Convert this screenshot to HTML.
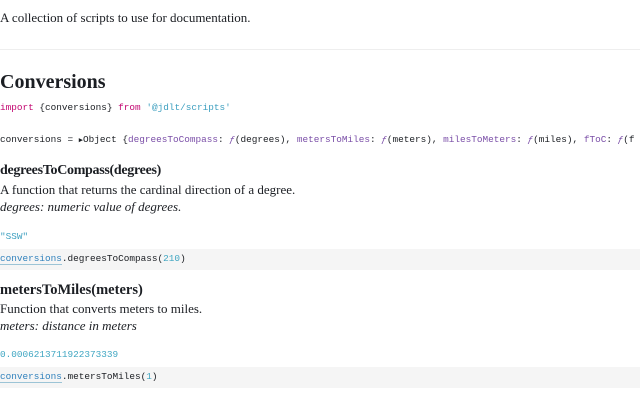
<!DOCTYPE html>
<html><head><style>
body{margin:0;width:640px;height:400px;overflow:hidden;background:#fff;color:#1b1e23;font-family:"Liberation Serif",serif;}
.a{position:absolute;left:0;white-space:nowrap;}
.m{font-family:"Liberation Mono",monospace;font-size:9.4px;color:#1b1e23;}
.s{font-size:13px;}
.k{color:#c30771}.str{color:#3fa0c0}.p{color:#7b4fa8}.n{color:#3fa6c2}
.u{border-bottom:1px solid #9cc4d6;color:#3182bd}
.bg{position:absolute;left:0;width:640px;height:21px;background:#f5f5f5;}
</style></head><body>
<div class="a s" style="top:10px">A collection of scripts to use for documentation.</div>
<div style="position:absolute;left:0;top:49px;width:640px;height:1px;background:#eee"></div>
<div class="a" style="top:71px;font-size:20px;font-weight:bold">Conversions</div>
<div class="a m" style="top:102px"><span class="k">import</span> {conversions} <span class="k">from</span> <span class="str">'@jdlt/scripts'</span></div>
<div class="a m" style="top:134px">conversions = <span style="font-size:7px">▶</span>Object {<span class="p">degreesToCompass</span>: <span class="p"><i>ƒ</i></span>(degrees), <span class="p">metersToMiles</span>: <span class="p"><i>ƒ</i></span>(meters), <span class="p">milesToMeters</span>: <span class="p"><i>ƒ</i></span>(miles), <span class="p">fToC</span>: <span class="p"><i>ƒ</i></span>(f</div>
<div class="a" style="top:163px;font-size:14px;font-weight:bold;letter-spacing:-0.3px">degreesToCompass(degrees)</div>
<div class="a s" style="top:182px">A function that returns the cardinal direction of a degree.</div>
<div class="a s" style="top:199px;font-style:italic">degrees: numeric value of degrees.</div>
<div class="a m str" style="top:231px">"SSW"</div>
<div class="bg" style="top:249px"></div>
<div class="a m" style="top:253px"><span class="u">conversions</span>.degreesToCompass(<span class="n">210</span>)</div>
<div class="a" style="top:282px;font-size:14.5px;font-weight:bold">metersToMiles(meters)</div>
<div class="a s" style="top:301px">Function that converts meters to miles.</div>
<div class="a s" style="top:318px;font-style:italic">meters: distance in meters</div>
<div class="a m n" style="top:349px">0.0006213711922373339</div>
<div class="bg" style="top:367px"></div>
<div class="a m" style="top:371px"><span class="u">conversions</span>.metersToMiles(<span class="n">1</span>)</div>
</body></html>
